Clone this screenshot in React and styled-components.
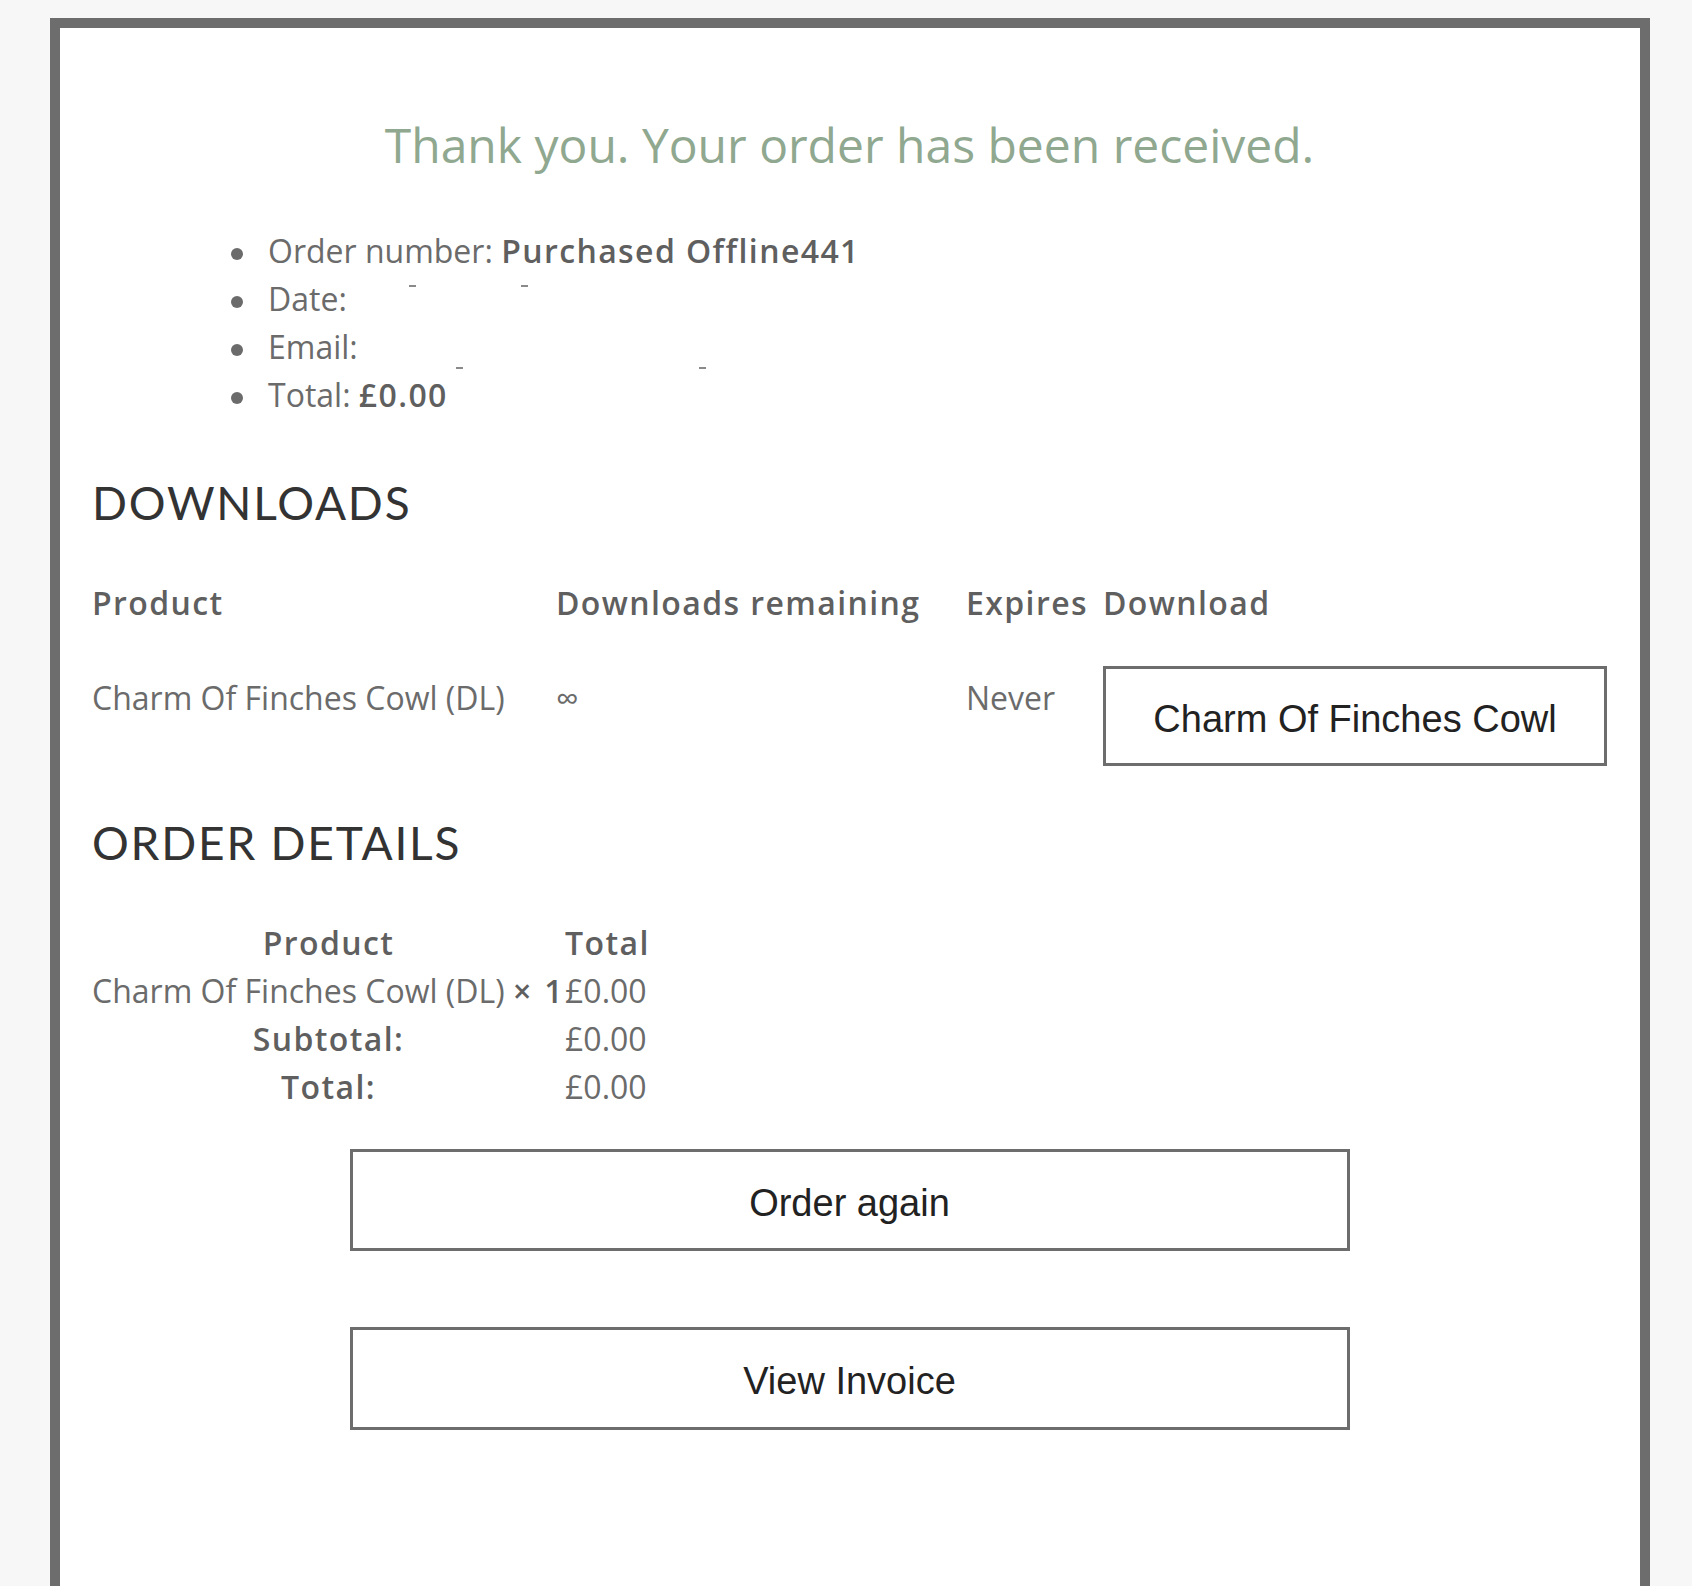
import React from "react";
import styled, { createGlobalStyle } from "styled-components";

const GlobalStyle = createGlobalStyle`
  body {
    margin: 0;
    background: #f7f7f7;
    font-family: "Open Sans", "Noto Sans", sans-serif;
    color: #6b6b6b;
  }
`;

const Page = styled.div`
  padding: 18px 42px 0 50px;
`;

const Card = styled.main`
  box-sizing: border-box;
  min-height: 1600px;
  padding: 85px 33px 0 32px;
  background: #fff;
  border: 10px solid #6d6d6d;
  border-bottom: 0;
`;

const Notice = styled.p`
  margin: 0;
  text-align: center;
  font-size: 48px;
  line-height: 64px;
  color: #8fa88f;
`;

const Overview = styled.ul`
  margin: 50px 0 0;
  padding-left: 176px;
  list-style: none;
  font-size: 32px;
  line-height: 48px;
  color: #6b6b6b;
`;

const OverviewItem = styled.li`
  &::before {
    content: "";
    display: inline-block;
    width: 12px;
    height: 12px;
    margin: 0 25px 0 -37px;
    border-radius: 50%;
    background: #6b6b6b;
    vertical-align: middle;
  }
`;

const Strong = styled.strong`
  font-weight: 600;
  letter-spacing: 1.4px;
  color: #5f5f5f;
`;

const Smudge = styled.span`
  display: inline-block;
  width: 7px;
  height: 2px;
  margin-left: ${({ $gap }) => $gap}px;
  vertical-align: ${({ $lift }) => $lift}px;
  background: #8a8a8a;
`;

const SectionTitle = styled.h2`
  margin: ${({ $top }) => $top}px 0 0;
  font-family: Lato, "Open Sans", sans-serif;
  font-weight: 400;
  font-size: 46px;
  line-height: 56px;
  letter-spacing: 1.8px;
  color: #333;
  text-transform: uppercase;
`;

const DownloadsTable = styled.table`
  width: 100%;
  margin-top: 48px;
  border-collapse: collapse;
  table-layout: fixed;
  font-size: 32px;
  line-height: 48px;
`;

const HeadCell = styled.th`
  width: ${({ $w }) => $w}px;
  padding: 0 0 39px;
  text-align: left;
  font-weight: 600;
  letter-spacing: 1.4px;
  color: #5f5f5f;
`;

const Cell = styled.td`
  padding: ${({ $flush }) => ($flush ? "0" : "8px 0 0")};
  vertical-align: top;
  color: #6b6b6b;
`;

const OutlineButton = styled.a`
  box-sizing: border-box;
  display: flex;
  align-items: center;
  justify-content: center;
  width: ${({ $w }) => ($w ? `${$w}px` : "100%")};
  height: ${({ $h }) => $h}px;
  padding-top: 6px;
  border: 3px solid #6d6d6d;
  font-family: "Liberation Sans", Arial, sans-serif;
  font-size: 38px;
  color: #222;
  text-decoration: none;
  cursor: pointer;
`;

const OrderTable = styled.table`
  margin-top: 48px;
  border-collapse: collapse;
  font-size: 32px;
  line-height: 48px;
`;

const OrderHead = styled.th`
  padding: 0;
  text-align: center;
  font-weight: 600;
  letter-spacing: 1.4px;
  color: #5f5f5f;
`;

const OrderCell = styled.td`
  padding: 0;
  color: #6b6b6b;
`;

const Qty = styled.strong`
  font-weight: 600;
  letter-spacing: 2.4px;
  color: #5f5f5f;
`;

const Actions = styled.div`
  display: flex;
  flex-direction: column;
  align-items: center;
  gap: 76px;
  margin-top: 38px;
`;

const App = () => (
  <>
    <GlobalStyle />
    <Page>
      <Card>
        <Notice>Thank you. Your order has been received.</Notice>

        <Overview>
          <OverviewItem>
            Order number: <Strong>Purchased Offline441</Strong>
          </OverviewItem>
          <OverviewItem>
            Date:
            <Smudge $gap={62} $lift={24} />
            <Smudge $gap={105} $lift={24} />
          </OverviewItem>
          <OverviewItem>
            Email:
            <Smudge $gap={98} $lift={-10} />
            <Smudge $gap={236} $lift={-10} />
          </OverviewItem>
          <OverviewItem>
            Total: <Strong>£0.00</Strong>
          </OverviewItem>
        </Overview>

        <SectionTitle $top={56}>Downloads</SectionTitle>
        <DownloadsTable>
          <thead>
            <tr>
              <HeadCell $w={464}>Product</HeadCell>
              <HeadCell $w={410}>Downloads remaining</HeadCell>
              <HeadCell $w={137}>Expires</HeadCell>
              <HeadCell $w={504}>Download</HeadCell>
            </tr>
          </thead>
          <tbody>
            <tr>
              <Cell>Charm Of Finches Cowl (DL)</Cell>
              <Cell>∞</Cell>
              <Cell>Never</Cell>
              <Cell $flush>
                <OutlineButton $h={100}>Charm Of Finches Cowl</OutlineButton>
              </Cell>
            </tr>
          </tbody>
        </DownloadsTable>

        <SectionTitle $top={49}>Order details</SectionTitle>
        <OrderTable>
          <thead>
            <tr>
              <OrderHead>Product</OrderHead>
              <OrderHead>Total</OrderHead>
            </tr>
          </thead>
          <tbody>
            <tr>
              <OrderCell>
                Charm Of Finches Cowl (DL) <Qty>× 1</Qty>
              </OrderCell>
              <OrderCell>£0.00</OrderCell>
            </tr>
          </tbody>
          <tfoot>
            <tr>
              <OrderHead>Subtotal:</OrderHead>
              <OrderCell>£0.00</OrderCell>
            </tr>
            <tr>
              <OrderHead>Total:</OrderHead>
              <OrderCell>£0.00</OrderCell>
            </tr>
          </tfoot>
        </OrderTable>

        <Actions>
          <OutlineButton $w={1000} $h={102}>Order again</OutlineButton>
          <OutlineButton $w={1000} $h={103}>View Invoice</OutlineButton>
        </Actions>
      </Card>
    </Page>
  </>
);

export default App;
